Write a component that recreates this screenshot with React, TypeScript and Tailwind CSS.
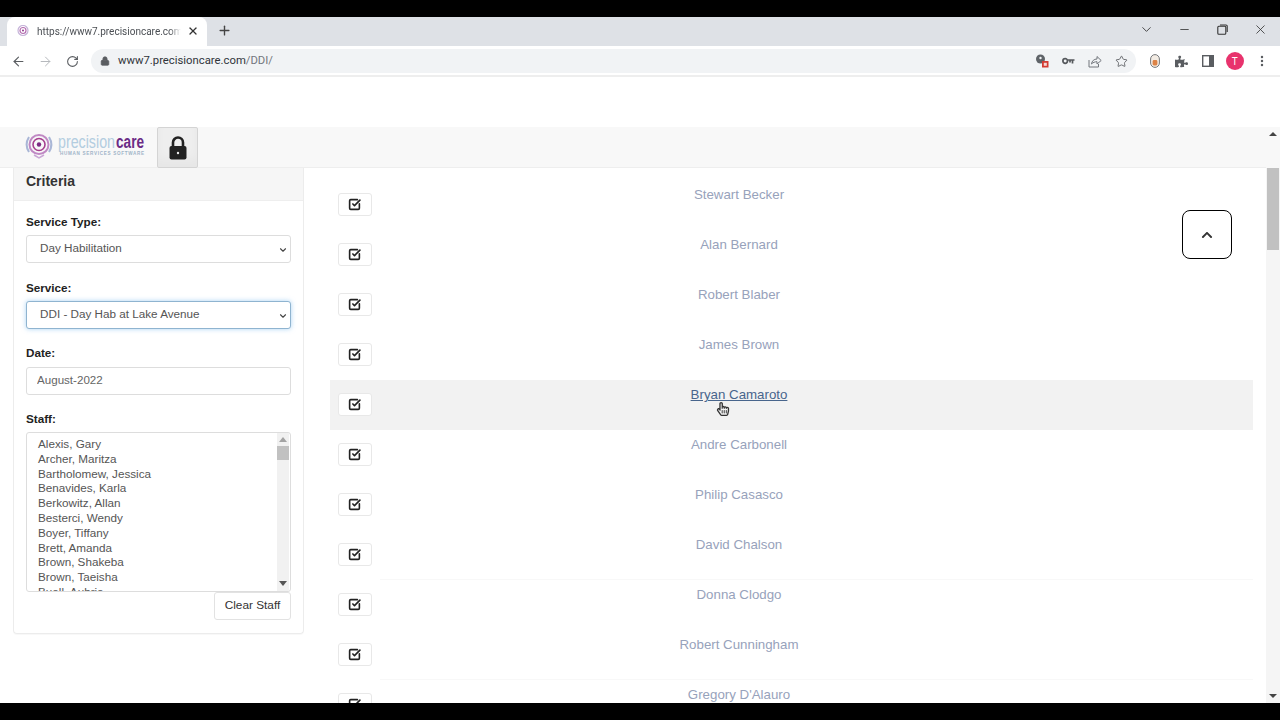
import { ArrowLeft, ArrowRight, ChevronDown, Lock, Minus, MoreVertical, Plus, RotateCw, SquareCheckBig, Star, X } from "lucide-react";
import { FaChevronUp, FaPuzzlePiece, FaRegHandPointer } from "react-icons/fa";

const people = [
    "Stewart Becker",
    "Alan Bernard",
    "Robert Blaber",
    "James Brown",
    "Bryan Camaroto",
    "Andre Carbonell",
    "Philip Casasco",
    "David Chalson",
    "Donna Clodgo",
    "Robert Cunningham",
    "Gregory D'Alauro",
];

const staff = [
    "Alexis, Gary",
    "Archer, Maritza",
    "Bartholomew, Jessica",
    "Benavides, Karla",
    "Berkowitz, Allan",
    "Besterci, Wendy",
    "Boyer, Tiffany",
    "Brett, Amanda",
    "Brown, Shakeba",
    "Brown, Taeisha",
    "Buell, Aubrie",
];

function Logo() {
    return (
        <svg width="126" height="34" viewBox="0 0 126 34" className="shrink-0">
            <g fill="none">
                <path d="M4 7 A14 14 0 0 0 4 22" stroke="#a9b6d6" strokeWidth="2" />
                <path d="M24 7 A14 14 0 0 1 24 22" stroke="#a9b6d6" strokeWidth="2" />
                <circle cx="14" cy="14.5" r="9.5" stroke="#c089c4" strokeWidth="2" />
                <circle cx="14" cy="14.5" r="6" stroke="#a6408f" strokeWidth="1.6" />
                <circle cx="14" cy="14.5" r="2.2" fill="#7d2a84" />
                <path d="M9 25 L14 28 L19 25" stroke="#c9a6d4" strokeWidth="1.5" />
            </g>
            <text x="33" y="18" fontSize="18" fontFamily="'Liberation Sans', sans-serif" fill="#b3cde0" textLength="57" lengthAdjust="spacingAndGlyphs">
                precision
            </text>
            <text x="91" y="18" fontSize="18" fontWeight="700" fontFamily="'Liberation Sans', sans-serif" fill="#6b2c86" textLength="28" lengthAdjust="spacingAndGlyphs">
                care
            </text>
            <text x="35" y="25" fontSize="4.6" fontWeight="700" fontFamily="'Liberation Sans', sans-serif" fill="#9fb4c8" textLength="84" lengthAdjust="spacing">
                HUMAN SERVICES SOFTWARE
            </text>
        </svg>
    );
}

function PadLock() {
    return (
        <svg width="18" height="24" viewBox="0 0 18 24">
            <path d="M4 11 V6.5 A5 5 0 0 1 14 6.5 V11" fill="none" stroke="#222" strokeWidth="2.6" />
            <rect x="0.5" y="10" width="17" height="13.5" rx="2" fill="#222" />
            <circle cx="9" cy="17" r="1.2" fill="#eee" />
        </svg>
    );
}

function Cell({ children, w = "w-[27px]" }: { children: React.ReactNode; w?: string }) {
    return <div className={`${w} flex items-center justify-center shrink-0`}>{children}</div>;
}

function ChromeBar() {
    return (
        <>
            <div className="h-[17px] bg-black shrink-0" />
            <div className="h-[29px] bg-[#dee1e6] flex items-end shrink-0 pl-[7px]">
                <div className="w-[200px] h-[29px] bg-white rounded-t-[8px] flex items-center pl-[10px] pb-px">
                    <svg width="12" height="12" viewBox="0 0 12 12" className="shrink-0">
                        <circle cx="6" cy="5.5" r="5" fill="none" stroke="#c5b3d9" strokeWidth="1.2" />
                        <circle cx="6" cy="5.5" r="3" fill="none" stroke="#b46db0" strokeWidth="1.2" />
                        <circle cx="6" cy="5.5" r="1" fill="#8e3a8c" />
                    </svg>
                    <span className="ml-[8px] w-[144px] whitespace-nowrap text-[10px] text-[#4b4f54] font-['Roboto',sans-serif] [mask-image:linear-gradient(to_right,black_92%,transparent)]">
                        https://www7.precisioncare.com/
                    </span>
                    <X size={12} strokeWidth={2.6} className="ml-[6px] text-[#333]" />
                </div>
                <Plus size={15} strokeWidth={2.2} className="ml-[10px] mb-[8px] text-[#444]" />
                <div className="flex-1" />
                <div className="h-[29px] flex items-center pb-[4px] text-[#333]">
                    <Cell w="w-[38px]"><ChevronDown size={15} strokeWidth={1.4} /></Cell>
                    <Cell w="w-[38px]"><Minus size={13} strokeWidth={1.5} /></Cell>
                    <Cell w="w-[38px]">
                        <svg width="11" height="11" viewBox="0 0 11 11" fill="none" stroke="#333" strokeWidth="1.1">
                            <rect x="0.8" y="2.2" width="8" height="8" rx="1" />
                            <path d="M3 1 H9 A1.2 1.2 0 0 1 10.2 2.2 V8" />
                        </svg>
                    </Cell>
                    <Cell w="w-[38px]"><X size={15} strokeWidth={1.3} /></Cell>
                    <div className="w-[0.5px]" />
                </div>
            </div>
            <div className="h-[29px] bg-white flex items-center shrink-0 pl-[4.5px] pr-[5px] pt-px text-[#5a5d61]">
                <Cell><ArrowLeft size={15} strokeWidth={1.8} /></Cell>
                <Cell><ArrowRight size={15} strokeWidth={1.6} className="text-[#b6b9bd]" /></Cell>
                <Cell><RotateCw size={13} strokeWidth={2} /></Cell>
                <div className="ml-[5.5px] flex-1 h-[24px] rounded-full bg-[#f1f3f5] flex items-center pl-[9px]">
                    <Lock size={10} fill="#5a5d61" strokeWidth={2} />
                    <span className="ml-[8px] text-[11.3px] text-[#30343a] font-['Roboto',sans-serif]">
                        www7.precisioncare.com<span className="text-[#73777d]">/DDI/</span>
                    </span>
                    <div className="flex-1" />
                    <Cell w="w-[26.5px]">
                        <svg width="14" height="14" viewBox="0 0 14 14">
                            <circle cx="5.5" cy="5" r="4.5" fill="#5f6368" />
                            <circle cx="5.5" cy="4" r="1.2" fill="#f1f3f5" />
                            <rect x="7" y="7" width="6.5" height="6.5" fill="#d33b32" />
                            <rect x="8.8" y="8.8" width="3" height="3" fill="#f6d5d2" />
                        </svg>
                    </Cell>
                    <Cell w="w-[26.5px]">
                        <svg width="13" height="8" viewBox="0 0 13 8" fill="none" stroke="#55585c" strokeWidth="1.7">
                            <circle cx="3.2" cy="4" r="2.3" />
                            <path d="M5.5 3 H12.5 M10.5 3 V6.5 M8 3 V5.5" />
                        </svg>
                    </Cell>
                    <Cell w="w-[26.5px]">
                        <svg width="14" height="13" viewBox="0 0 14 13" fill="none" stroke="#73777d" strokeWidth="1">
                            <path d="M1 5 V12 H10.5 V9" />
                            <path d="M3.5 9 C3.8 6 6 4 9 4 V1.5 L13.2 5.5 L9 9 V6.7 C7 6.7 5 7.4 3.5 9 Z" />
                        </svg>
                    </Cell>
                    <Cell w="w-[26.5px]"><Star size={13} strokeWidth={1.6} /></Cell>
                    <div className="w-px" />
                </div>
                <div className="w-[5.5px]" />
                <Cell>
                    <svg width="10" height="14" viewBox="0 0 10 14">
                        <rect x="0.6" y="0.6" width="8.8" height="12.8" rx="4.4" fill="#f3ece4" stroke="#77797c" strokeWidth="1" />
                        <rect x="2.6" y="6" width="4.8" height="5.5" rx="1.4" fill="#dd8346" />
                    </svg>
                </Cell>
                <Cell><FaPuzzlePiece size={13} /></Cell>
                <Cell w="w-[26.5px]">
                    <svg width="12" height="12" viewBox="0 0 12 12">
                        <rect x="0.7" y="0.7" width="10.6" height="10.6" fill="none" stroke="#5a5d61" strokeWidth="1.4" />
                        <rect x="7" y="1" width="4" height="10" fill="#5a5d61" />
                    </svg>
                </Cell>
                <Cell w="w-[26.5px]">
                    <div className="w-[18px] h-[18px] rounded-full bg-[#e8336d] text-white text-[10px] flex items-center justify-center font-['Noto_Sans',sans-serif]">
                        T
                    </div>
                </Cell>
                <Cell><MoreVertical size={14} strokeWidth={2.2} /></Cell>
            </div>
            <div className="h-[2px] bg-[#eeeeee] shrink-0" />
        </>
    );
}

function FieldLabel({ text, mb = "mb-[6px]" }: { text: string; mb?: string }) {
    return <div className={`h-[14px] ${mb} text-[11.7px] leading-[14px] font-bold text-[#222]`}>{text}</div>;
}

function SelectBox({ value, focused, mb }: { value: string; focused?: boolean; mb: string }) {
    return (
        <div className={`relative w-[265px] h-[28px] ${mb}`}>
            <select
                defaultValue={value}
                className={`block w-full h-full pl-[13px] pr-[20px] pb-[2px] appearance-none text-[11.7px] text-[#555] bg-white border rounded-[3px] outline-none ${
                    focused ? "border-[#8fb4d0] shadow-[0_0_5px_rgba(102,175,233,0.55)]" : "border-[#dddddd]"
                }`}
            >
                <option>{value}</option>
            </select>
            <ChevronDown size={10} strokeWidth={2.6} className="absolute right-[3px] top-[9.5px] text-[#444] pointer-events-none" />
        </div>
    );
}

function Sidebar() {
    return (
        <div className="ml-[13px] w-[291px] h-[466px] shrink-0 border border-[#ececec] border-t-0 rounded-b-[4px] shadow-[0_1px_1px_rgba(0,0,0,0.03)]">
            <div className="h-[33px] bg-[#f6f6f6] border-b border-[#eeeeee] pl-[12px] pt-[3px] text-[14px] leading-[20px] font-bold text-[#333]">
                Criteria
            </div>
            <div className="px-[12px] pt-[14px]">
                <FieldLabel text="Service Type:" />
                <SelectBox value="Day Habilitation" mb="mb-[18px]" />
                <FieldLabel text="Service:" />
                <SelectBox value="DDI - Day Hab at Lake Avenue" focused mb="mb-[17px]" />
                <FieldLabel text="Date:" mb="mb-[7px]" />
                <input
                    readOnly
                    defaultValue="August-2022"
                    className="block w-[265px] h-[28px] px-[10px] pb-[3px] mb-[17px] text-[11.6px] text-[#666] bg-white border border-[#dddddd] rounded-[3px] outline-none"
                />
                <FieldLabel text="Staff:" />
                <div className="w-[265px] h-[160px] border border-[#dddddd] rounded-[3px] flex overflow-hidden">
                    <div className="flex-1 pl-[11px] pt-[4px] overflow-hidden text-[11.7px] leading-[14.8px] text-[#555]">
                        {staff.map((name) => (
                            <div key={name} className="whitespace-nowrap">{name}</div>
                        ))}
                    </div>
                    <div className="w-[12px] mr-px bg-[#f1f1f1] flex flex-col items-center text-[#555]">
                        <div className="h-[13px] flex items-center justify-center text-[#a3a3a3]">
                            <div className="border-x-[4px] border-x-transparent border-b-[5px] border-b-current" />
                        </div>
                        <div className="w-full h-[14px] bg-[#c1c1c1]" />
                        <div className="flex-1" />
                        <div className="h-[15px] flex items-center justify-center">
                            <div className="border-x-[4px] border-x-transparent border-t-[5px] border-t-current" />
                        </div>
                    </div>
                </div>
                <div className="flex justify-end">
                    <button className="w-[77px] h-[28px] bg-white border border-[#e2e2e2] rounded-[3px] text-[11.8px] text-[#333]">
                        Clear Staff
                    </button>
                </div>
            </div>
        </div>
    );
}

function PersonRow({ name }: { name: string }) {
    const hovered = name === "Bryan Camaroto";
    const divided = name === "David Chalson" || name === "Robert Cunningham";
    return (
        <div className={`h-[50px] flex shrink-0 ${hovered ? "bg-[#f2f2f2]" : ""}`}>
            <div className="w-[50px] pl-[8px] pt-[13px] shrink-0">
                <button className="w-[34px] h-[23px] pr-px bg-white border border-[#e8e8e8] rounded-[3px] flex items-center justify-center text-[#222]">
                    <SquareCheckBig size={13} strokeWidth={3} />
                </button>
            </div>
            <div className={`flex-1 ${divided ? "border-b border-[#f8f8f8]" : ""}`}>
                <div className="w-[718px] pt-[5px] text-center text-[13.3px] leading-[20px]">
                    <a className={hovered ? "text-[#48658c] underline" : "text-[#97a2bb]"}>{name}</a>
                </div>
            </div>
        </div>
    );
}

export default function App() {
    return (
        <div className="w-[1280px] h-[720px] relative overflow-hidden flex flex-col bg-white font-['Liberation_Sans',Arial,sans-serif]">
            <ChromeBar />
            <div className="h-[50px] bg-white shrink-0" />
            <div className="flex-1 min-h-0 flex">
                <div className="flex-1 min-w-0 flex flex-col">
                    <div className="h-[41px] bg-[#f8f8f8] border-b border-[#eeeeee] shrink-0 flex pl-[25px]">
                        <div className="pt-[3px] w-[132px]"><Logo /></div>
                        <div className="w-[41px] h-[41px] bg-[#eeeeee] border border-[#d4d4d4] rounded-[2px] flex items-center justify-center shadow-[inset_0_-8px_10px_rgba(0,0,0,0.03)]">
                            <PadLock />
                        </div>
                    </div>
                    <div className="flex-1 min-h-0 flex overflow-hidden">
                        <Sidebar />
                        <div className="ml-[26px] w-[923px] pt-[12px] flex flex-col shrink-0">
                            {people.map((name) => (
                                <PersonRow key={name} name={name} />
                            ))}
                        </div>
                    </div>
                </div>
                <div className="w-[14px] bg-[#f5f5f5] shrink-0 flex flex-col items-center">
                    <div className="h-[41px] w-full bg-[#f8f8f8] flex justify-center pt-[5px] text-[#444]">
                        <div className="border-x-[4px] border-x-transparent border-b-[4px] border-b-current h-0" />
                    </div>
                    <div className="w-[12px] h-[82px] bg-[#c1c1c1]" />
                    <div className="flex-1" />
                    <div className="h-[15px] flex items-center text-[#444]">
                        <div className="border-x-[4px] border-x-transparent border-t-[4px] border-t-current" />
                    </div>
                </div>
            </div>
            <div className="h-[17px] bg-black shrink-0" />
            <button className="absolute left-[1182px] top-[210px] w-[50px] h-[49px] bg-white border-[1.5px] border-black rounded-[8px] flex items-center justify-center text-[#333]">
                <FaChevronUp size={12} />
            </button>
            <FaRegHandPointer size={14} className="absolute left-[716px] top-[402px] text-[#333]" />
        </div>
    );
}
